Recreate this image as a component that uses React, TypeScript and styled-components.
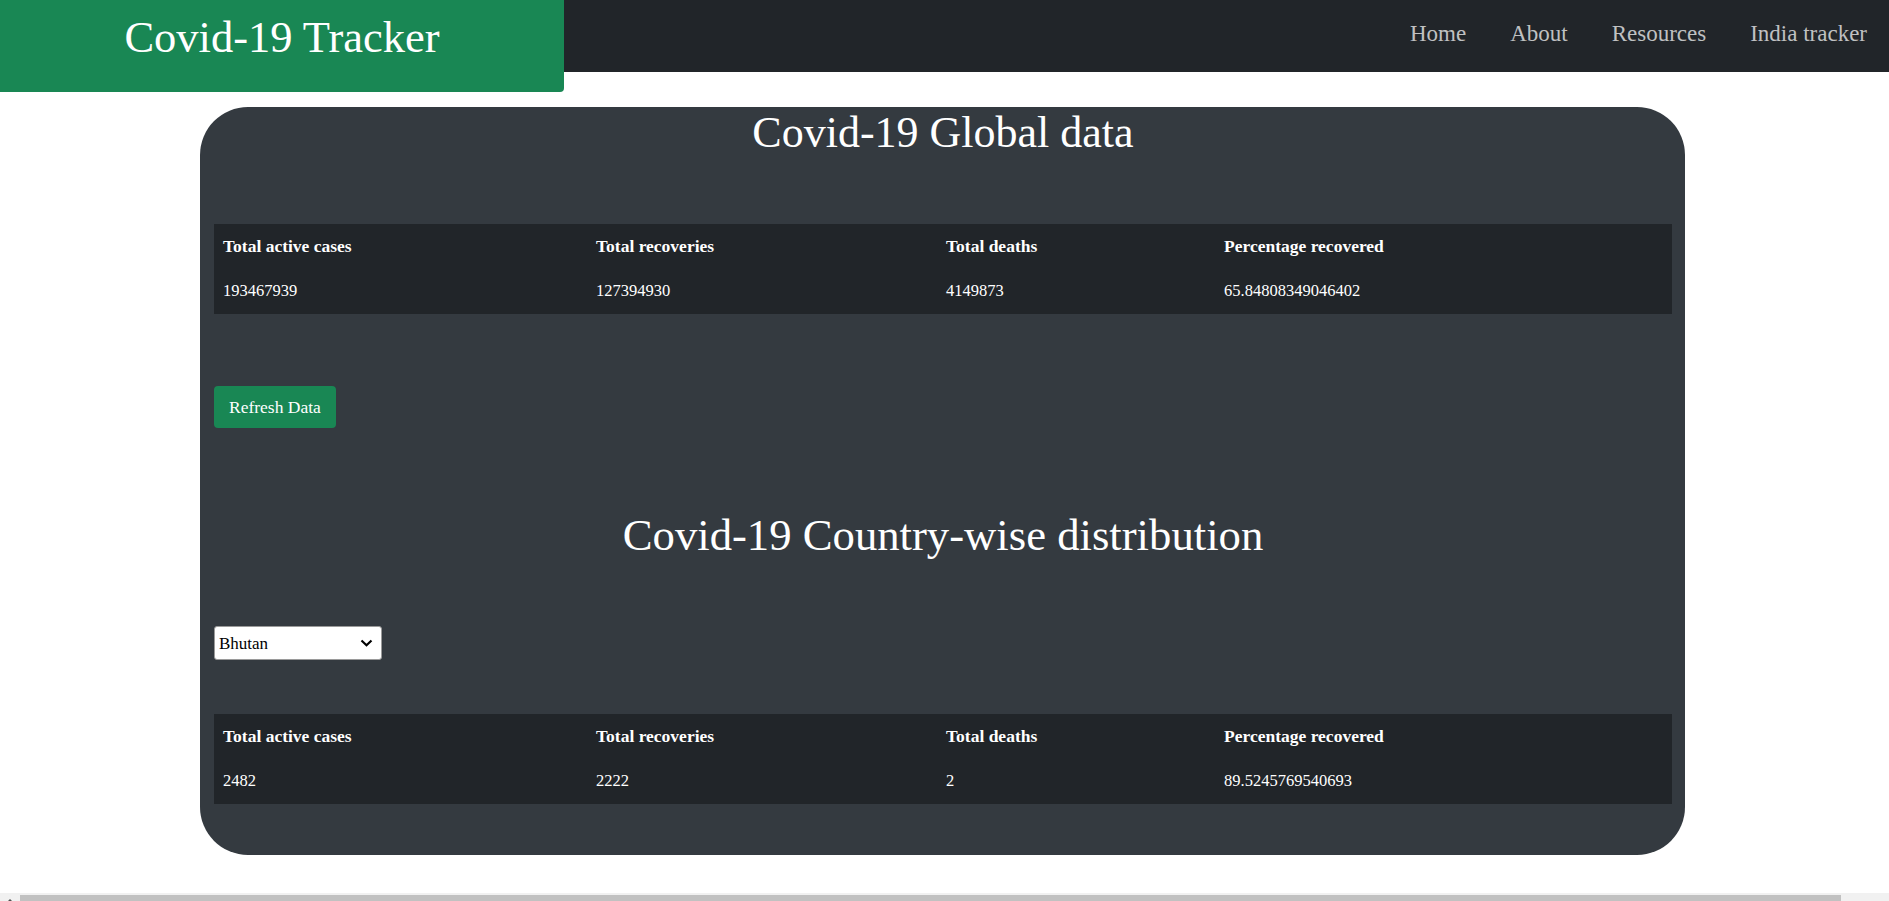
import React, { useState, ChangeEvent } from 'react'
import styled, { createGlobalStyle } from 'styled-components'

const GLOBAL_STATS = {
  active: '193467939',
  recovered: '127394930',
  deaths: '4149873',
  percentage: '65.84808349046402',
}

const COUNTRY_STATS: Record<string, typeof GLOBAL_STATS> = {
  Bhutan: {
    active: '2482',
    recovered: '2222',
    deaths: '2',
    percentage: '89.5245769540693',
  },
  India: {
    active: '31293062',
    recovered: '30439035',
    deaths: '419470',
    percentage: '97.27096024823063',
  },
}

const NAV_LINKS = ['Home', 'About', 'Resources', 'India tracker']

const GlobalStyle = createGlobalStyle`
  html, body {
    margin: 0;
    background: #fff;
    font-family: 'Liberation Serif', 'Times New Roman', serif;
    overflow: hidden;
  }
`

type Stats = typeof GLOBAL_STATS

const StatsTable: React.FC<{ stats: Stats }> = ({ stats }) => {
  return (
    <Table>
      <HeadCell>Total active cases</HeadCell>
      <HeadCell>Total recoveries</HeadCell>
      <HeadCell>Total deaths</HeadCell>
      <HeadCell>Percentage recovered</HeadCell>
      <Cell>{stats.active}</Cell>
      <Cell>{stats.recovered}</Cell>
      <Cell>{stats.deaths}</Cell>
      <Cell>{stats.percentage}</Cell>
    </Table>
  )
}

const App: React.FC = () => {
  const [country, setCountry] = useState('Bhutan')
  const onCountryChange = (e: ChangeEvent<HTMLSelectElement>) => {
    setCountry(e.target.value)
  }
  return (
    <>
      <GlobalStyle />
      <Header>
        <Brand>Covid-19 Tracker</Brand>
        <NavBar>
          {NAV_LINKS.map((link) => (
            <NavLink key={link}>{link}</NavLink>
          ))}
        </NavBar>
      </Header>
      <Card>
        <Title>Covid-19 Global data</Title>
        <StatsTable stats={GLOBAL_STATS} />
        <RefreshButton>Refresh Data</RefreshButton>
        <Title $top={81} $size={44.7}>Covid-19 Country-wise distribution</Title>
        <SelectWrap>
          <CountrySelect value={country} onChange={onCountryChange}>
            {Object.keys(COUNTRY_STATS).map((name) => (
              <option key={name}>{name}</option>
            ))}
          </CountrySelect>
          <Chevron width='13' height='8' viewBox='0 0 13 8'>
            <path d='M1.5 1.5 L6.5 6.2 L11.5 1.5' fill='none' stroke='#000' strokeWidth='2.2' />
          </Chevron>
        </SelectWrap>
        <StatsTable stats={COUNTRY_STATS[country]} />
      </Card>
      <ScrollTrack>
        <ScrollArrow width='20' height='6' viewBox='0 0 20 6'>
          <path d='M8 6 L10 4 L12 6 Z' fill='#505050' />
        </ScrollArrow>
        <ScrollThumb />
      </ScrollTrack>
    </>
  )
}

export default App

const Header = styled.header`
  display: flex;
  align-items: flex-start;
`

const Brand = styled.div`
  width: 564px;
  height: 92px;
  box-sizing: border-box;
  padding-top: 11px;
  background: #198754;
  border-bottom-right-radius: 4px;
  color: #fff;
  font-size: 44.5px;
  line-height: 52px;
  text-align: center;
  flex-shrink: 0;
`

const NavBar = styled.nav`
  flex: 1;
  height: 72px;
  background: #212529;
  display: flex;
  align-items: center;
  justify-content: flex-end;
  gap: 44px;
  padding-right: 22px;
`

const NavLink = styled.a`
  color: rgba(255, 255, 255, 0.72);
  font-size: 23px;
  line-height: 30px;
  margin-bottom: 4px;
  cursor: pointer;
`

const Card = styled.main`
  width: 1485px;
  margin: 15px 0 0 200px;
  box-sizing: border-box;
  padding: 0 13px 51px 14px;
  background: #343a40;
  border-radius: 48px;
  display: flex;
  flex-direction: column;
  align-items: flex-start;
`

const Title = styled.h1<{ $top?: number; $size?: number }>`
  align-self: stretch;
  margin: ${(p) => p.$top ?? 0}px 0 65px;
  color: #fff;
  font-size: ${(p) => p.$size ?? 44}px;
  font-weight: 400;
  line-height: 52px;
  text-align: center;
`

const Table = styled.div`
  align-self: stretch;
  display: grid;
  grid-template-columns: 373px 350px 278px 1fr;
  grid-auto-rows: 45px;
  background: #212529;
  color: #fff;
`

const HeadCell = styled.div`
  display: flex;
  align-items: center;
  padding: 0 9px;
  font-size: 17.5px;
  font-weight: 700;
`

const Cell = styled.div`
  display: flex;
  align-items: center;
  padding: 0 9px 2px;
  font-size: 16.5px;
`

const RefreshButton = styled.button`
  margin-top: 72px;
  height: 42px;
  padding: 0 15px;
  border: none;
  border-radius: 4px;
  background: #198754;
  color: #fff;
  font-family: inherit;
  font-size: 17.5px;
  cursor: pointer;
`

const SelectWrap = styled.div`
  position: relative;
  margin-bottom: 54px;
`

const CountrySelect = styled.select`
  appearance: none;
  display: block;
  width: 168px;
  height: 34px;
  padding: 0 24px 0 4px;
  border: 1px solid #9a9a9a;
  border-radius: 3px;
  background: #fff;
  color: #000;
  font-family: inherit;
  font-size: 17px;
`

const Chevron = styled.svg`
  position: absolute;
  right: 9px;
  top: 13px;
  pointer-events: none;
`

const ScrollTrack = styled.div`
  position: fixed;
  left: 0;
  right: 0;
  bottom: 0;
  height: 8px;
  background: #f1f1f1;
  display: flex;
  align-items: flex-end;
`

const ScrollArrow = styled.svg`
  display: block;
`

const ScrollThumb = styled.div`
  width: 1821px;
  height: 6px;
  background: #c1c1c1;
`
